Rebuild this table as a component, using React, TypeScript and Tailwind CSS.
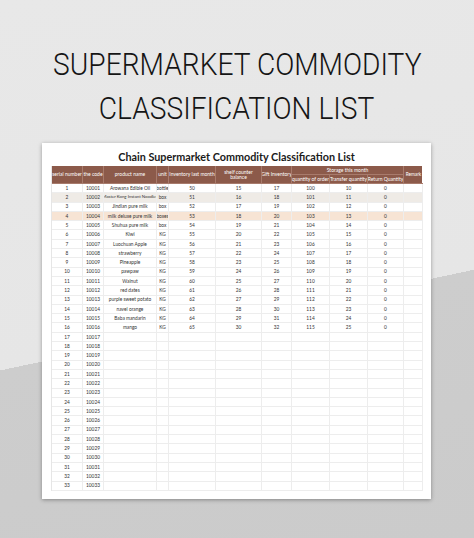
import React from 'react'

const cols = 'grid grid-cols-[31px_21px_53px_12px_47px_46px_30px_38px_38px_36px_19px]'

const items: [string, string][] = [
  ['Arowana Edible Oil', 'bottle'],
  ['Master Kong Instant Noodles', 'box'],
  ['Jindian pure milk', 'box'],
  ['milk deluxe pure milk', 'boxes'],
  ['Shuhua pure milk', 'box'],
  ['Kiwi', 'KG'],
  ['Luochuan Apple', 'KG'],
  ['strawberry', 'KG'],
  ['Pineapple', 'KG'],
  ['pawpaw', 'KG'],
  ['Walnut', 'KG'],
  ['red dates', 'KG'],
  ['purple sweet potato', 'KG'],
  ['navel orange', 'KG'],
  ['Baba mandarin', 'KG'],
  ['mango', 'KG'],
]

const rowBg = (i: number) => {
  if (i === 1) return 'bg-[#efebe6]'
  if (i === 3) return 'bg-[#f7e4d4]'
  return 'bg-white'
}

const Cell = ({ children, small = false }: { children?: React.ReactNode; small?: boolean }) => (
  <div
    className={`flex items-center justify-center overflow-hidden whitespace-nowrap border-r border-b border-[#ededed] leading-none text-[#333] ${
      small ? 'text-[4.3px]' : 'text-[4.8px]'
    }`}
  >
    {children}
  </div>
)

const Head = ({ children, className = '' }: { children: React.ReactNode; className?: string }) => (
  <div
    className={`flex items-center justify-center overflow-hidden whitespace-nowrap text-center border-r border-b border-[#a87b6c] leading-[5px] text-white ${className}`}
  >
    {children}
  </div>
)

export default function App() {
  const rows = Array.from({ length: 33 }, (_, i) => i)

  return (
    <div className="w-[474px] h-[538px] overflow-hidden flex flex-col bg-[linear-gradient(168deg,#e8e8e8_0%,#e6e6e6_58%,#cdcdcd_58%,#cbcbcb_100%)] font-['Lato','Noto_Sans',sans-serif]">
      <div className="h-[143px] flex flex-col items-center pt-[42px] font-['Roboto',sans-serif]">
        <h1 className="text-[32px] leading-[44px] font-light text-[#151515] whitespace-nowrap scale-x-[0.88]">
          SUPERMARKET COMMODITY
        </h1>
        <h1 className="text-[32px] leading-[44px] font-light text-[#151515] whitespace-nowrap scale-x-[0.88]">
          CLASSIFICATION LIST
        </h1>
      </div>

      <div className="ml-[42px] w-[389px] h-[356px] bg-white shadow-[0_1px_4px_rgba(0,0,0,0.35)] pl-[9px] pt-[5px]">
        <div className="w-[371px] text-center text-[10.8px] leading-[18px] font-bold text-[#1a1a1a]">
          Chain Supermarket Commodity Classification List
        </div>

        <div className="w-[371px] border-l border-[#e6e6e6]">
          <div className={`${cols} grid-rows-[9px_9px] bg-[#8c5a4a] text-[5px]`}>
            <Head className="row-span-2">serial number</Head>
            <Head className="row-span-2">the code</Head>
            <Head className="row-span-2">product name</Head>
            <Head className="row-span-2">unit</Head>
            <Head className="row-span-2">Inventory last month</Head>
            <Head className="row-span-2 whitespace-normal">
              shelf counter
              <br />
              balance
            </Head>
            <Head className="row-span-2">Gift Inventory</Head>
            <Head className="col-span-3">Storage this month</Head>
            <Head className="row-span-2 border-r-0 text-[4.7px]">Remark</Head>
            <Head>quantity of order</Head>
            <Head>Transfer quantity</Head>
            <Head>Return Quantity</Head>
          </div>

          {rows.map((i) => {
            const item = items[i]
            return (
              <div key={i} className={`${cols} h-[9.3px] ${rowBg(i)}`}>
                <Cell>{i + 1}</Cell>
                <Cell>{10001 + i}</Cell>
                <Cell small={i === 1}>{item ? item[0] : ''}</Cell>
                <Cell>{item ? item[1] : ''}</Cell>
                <Cell>{item ? 50 + i : ''}</Cell>
                <Cell>{item ? 15 + i : ''}</Cell>
                <Cell>{item ? 17 + i : ''}</Cell>
                <Cell>{item ? 100 + i : ''}</Cell>
                <Cell>{item ? 10 + i : ''}</Cell>
                <Cell>{item ? 0 : ''}</Cell>
                <Cell />
              </div>
            )
          })}
        </div>
      </div>
    </div>
  )
}
